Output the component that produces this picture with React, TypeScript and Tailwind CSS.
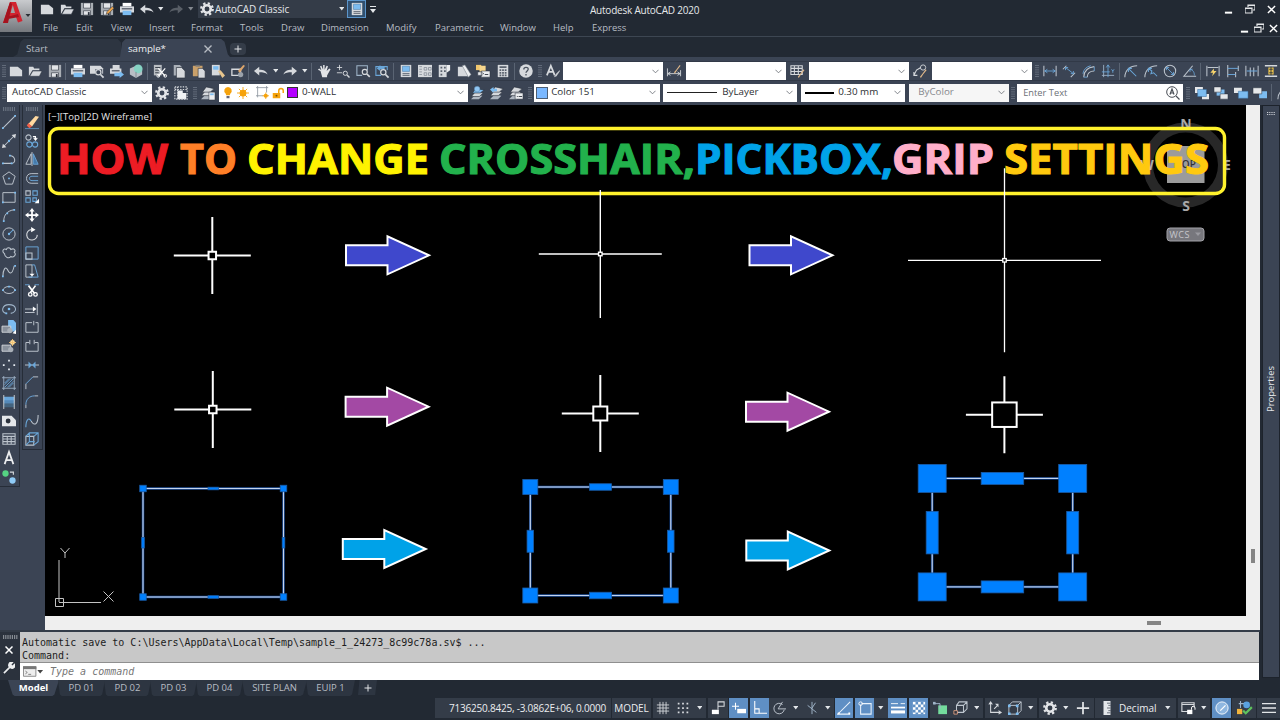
import type { ReactNode } from 'react';
import clsx from 'clsx';

const L = '#d6d9dd';
const B = '#7cbcf0';
const M = '#9fb4c8';
const K = '#2b323d';
const LINE = '#bcc4cd';
const BLUE = '#6aa6d8';

/* Shared glyph parts */
const page = <path d="M1 3h9l5 4v7H1z" fill={L} />;
const folder = (
  <>
    <path d="M1 14V3h5l1 2h6v2H5z" fill={L} />
    <path d="M5.500 8H16l-3 6H2z" fill={L} stroke={K} strokeWidth=".6" />
  </>
);
const floppy = (
  <>
    <path d="M1 1h14v14H1z" fill="#a9aeb4" />
    <path d="M4 1h8v6H4zM4 10h8v5H4z" fill="#e3e5e8" stroke={K} strokeWidth=".7" />
    <path d="M9 11.500h2V15H9z" fill={K} />
  </>
);
const printer = (
  <>
    <path d="M3 1h10v4H3z" fill="#fff" />
    <path d="M0 5h16v7H0z" fill={L} />
    <path d="M2 7h12v1.500H2z" fill="#555d69" />
    <path d="M3 10h10v5H3z" fill={B} />
  </>
);
const lens = (
  <>
    <circle cx="9.500" cy="9.500" r="3" fill="none" stroke={L} strokeWidth="1.400" />
    <path d="m12 12 3.500 3.500" stroke={L} strokeWidth="2" />
  </>
);
const gear = (
  <>
    <circle cx="8" cy="8" r="4.300" fill="none" stroke="#e3e5e8" strokeWidth="3" />
    <circle cx="8" cy="8" r="6.600" fill="none" stroke="#e3e5e8" strokeWidth="2.600" strokeDasharray="2.600 2.580" />
  </>
);
const undo = <path d="M0 8l6-5v3.500c5 0 8 1.500 9.500 5.500-2.500-2-5-2.500-9.500-2.500V13z" fill={L} />;
const redo = <path d="M16 8l-6-5v3.500c-5 0-8 1.500-9.500 5.500 2.500-2 5-2.500 9.500-2.500V13z" fill={L} />;
const sheets = (
  <>
    <path d="m5 10-5 5h9l4-4z" fill="#aeb6c0" />
    <path d="M5 6.500.5 12h9L14 8z" fill={L} stroke={K} strokeWidth=".7" />
    <path d="M6 3 1.500 8h9L15 4.500z" fill={B} stroke={K} strokeWidth=".7" />
  </>
);
const graySheets = (
  <>
    <path d="m5 10-5 5h9l4-4z" fill="#aeb6c0" />
    <path d="M5 5.500.5 11h9L14 7z" fill={L} stroke={K} strokeWidth=".7" />
    <path d="M6 1 1.500 7h9L15 3z" fill={L} stroke={K} strokeWidth=".7" />
  </>
);
const brush = <path d="m15.500 6-4 5-2.500 4-1-1.500 2.500-3L14.500 5z" fill="#e0b889" />;
const palette = (
  <>
    <path d="M2 1h12v14H2z" fill={L} />
    <path d="M4 2.500h8v6H4z" fill={B} stroke="#4a7ba6" strokeWidth=".6" />
    <path d="M4 11h8M4 13h8" stroke="#555d69" />
  </>
);

const stroked = (d: string, color = LINE, width = 1.2) => (
  <path d={d} fill="none" stroke={color} strokeWidth={width} />
);

const glyphs: Record<string, ReactNode> = {
  page,
  folder,
  floppy,
  printer,
  gear,
  undo,
  redo,
  sheets,
  palette,
  saveAs: <>{floppy}<path d="m7 14 1-3 6-6 2 2-6 6z" fill="#e9a24b" stroke={K} strokeWidth=".6" /></>,
  preview: <><path d="M0 2h12l3 3v6H0z" fill={L} /><path d="M6 6h8v8H6z" fill="#3b4454" />{lens}</>,
  publish: <><path d="M3 1h8v4H3zM0 5h13v6H0z" fill={L} /><path d="M2 7h9v1.500H2z" fill="#555d69" /><path d="M5 10h6V8l5 4-5 4v-2H5z" fill={B} /></>,
  sphere: <><path d="m1 5 7-3 7 4v6l-7 4-7-4z" fill="#b8bec5" /><circle cx="10.500" cy="5.500" r="5" fill="#86d3c4" /><path d="M8 16V9" stroke="#7d858f" /></>,
  cut: <><path d="M1 1h9v12H1z" fill="#b9bdc2" /><path d="M2.500 4h6M2.500 7h5M2.500 10h4" stroke={K} /><path d="m6 5 8 9M14 5l-8 9" stroke="#fff" strokeWidth="1.300" /><circle cx="6" cy="13.500" r="1.600" fill="none" stroke="#fff" /><circle cx="14" cy="13.500" r="1.600" fill="none" stroke="#fff" /></>,
  copy: <><path d="M2 1h7l2 2v10H2z" fill="#aab0b8" /><path d="M5 4h6l4 4v8H5z" fill={L} stroke={K} strokeWidth=".8" /></>,
  paste: <><path d="M1 2h11v12H1z" fill="#c9a06a" /><path d="M4 1h5v2H4z" fill="#777" /><path d="M7 5h5l3 3v8H7z" fill={L} stroke={K} strokeWidth=".7" /></>,
  match: <><path d="M1 1h9v12H1z" fill={L} /><path d="M2.500 2.500h6v4h-6z" fill={B} /><path d="m8 8 3-1 5 6-3 3z" fill="#e8c58d" /></>,
  block: <><path d="M1 6h10v7H1z" fill="none" stroke={L} strokeWidth="1.500" /><circle cx="11" cy="12" r="3" fill="#9aa1aa" /><path d="m8 8 6-7 2 1-6 8z" fill="#dca56b" /></>,
  hand: <path d="M4 8 1 6.500 2.500 5 5 7 3.500 2.500 5 2l2 4.500V1h1.700v5.500L11 2l1.500.6L11 8l3-3 1.500 1-4 7v2H6z" fill="#e3e5e8" />,
  zoomRt: <><path d="M1 4h6M4 1v6M1 10h6" stroke={L} /><g transform="translate(3 3)scale(.8)">{lens}</g></>,
  zoomWin: <>{stroked('M1 2h12v11H1z', M)}<path d="M7 7h8v8H7z" fill="#3b4454" /><g transform="translate(1)scale(.95)">{lens}</g></>,
  zoomPrev: <>{stroked('M1 3h13v10H1z', BLUE)}<path d="m2 5 4-4v2h5v3H6v2z" fill={BLUE} /><path d="M7 7h8v8H7z" fill="#3b4454" />{lens}</>,
  designCenter: <><path d="M0 1h16v14H0z" fill={L} /><path d="M1.500 3h3M1.500 6h3M1.500 9h3M1.500 12h3M7 4h3v3H7zM12 4h3v3h-3zM7 10h3v3H7zM12 10h3v3h-3z" fill="none" stroke="#7b838e" strokeWidth=".8" /></>,
  toolPal: <><path d="M2 1h9v14H2z" fill={L} /><path d="M11 1h4v6l-4 3z" fill="#eceef0" /><path d="M4 3h2v2H4zM8 3h2v2H8zM4 7h2v2H4zM8 7h2v2H8zM4 11h2v2H4z" fill="#59616d" /></>,
  sheetSet: <><path d="M1 3h6l6 11H1z" fill={L} /><path d="M6 2 9 1l7 11-3 3z" fill="#eceef0" stroke="#777f89" strokeWidth=".6" /></>,
  markup: <><path d="M0 1h6v6H0z" fill="#f0c66d" /><path d="M4 2h7v7H4z" fill="#f5d58c" /><path d="M2 9h5v4H2zM6 8h10v7H6z" fill="#eceef0" stroke={K} strokeWidth=".6" /><path d="M8 11h1M10 12h4" stroke={K} /></>,
  calc: <><path d="M2 1h12v14H2z" fill={L} /><path d="M4 2.500h8v2H4zM4 6h2v2H4zM7 6h2v2H7zM10 6h2v2h-2zM4 9h2v2H4zM7 9h2v2H7zM10 9h2v2h-2zM4 12h2v2H4zM7 12h2v2H7zM10 12h2v2h-2z" fill="#59616d" /></>,
  help: <><circle cx="8" cy="8" r="7.700" fill="#d6d9dd" />{stroked('M5.500 6.200C5.500 3 10.700 3.200 10.500 6c-.1 1.800-2.500 2-2.500 4M8 11.400v1.600', '#4a525e', 1.500)}</>,
  textStyle: <>{stroked('M1 13 5.500 2l4.500 11M3 9h5', L, 2)}<path d="m15.500 7-4 4-2.500 4 3-1 4-6z" fill="#c9ccd1" /></>,
  dimStyle: <>{stroked('M.5 5v9M15.500 7v7M1 11h14M4 9l-3 2 3 2M12 9l3 2-3 2', L, 1)}<g transform="translate(0 -4)">{brush}</g></>,
  tableStyle: <>{stroked('M1 2h13v10H1zM1 5h13M1 8.500h13M5 2v10M9.500 2v10', L, 1.200)}<g transform="translate(1 1)">{brush}</g></>,
  leaderStyle: <>{stroked('M1 13 4 7l5-3M1 9v4h4', L, 1.200)}<circle cx="11.500" cy="4" r="3" fill="none" stroke={L} /><g transform="translate(0 1)">{brush}</g></>,
  dimLinear: <>{stroked('M1 2v12M15 2v12')}{stroked('M2 8h12M5 6 2 8l3 2M11 6l3 2-3 2', BLUE, 1)}</>,
  dimAligned: <>{stroked('m1 6 4-4M10 15l5-5')}{stroked('m4 4 9 7M4 7V4h3M13 8v3h-3', BLUE, 1)}</>,
  dimArc: <>{stroked('M2 15c0-7 4-11 12-12M6 15c0-4 3-7 8-7')}{stroked('M1 11c1-5 4-8 9-9M14 3v5M2 15h4', BLUE, 1)}</>,
  dimOrd: <>{stroked('M1 13h14M3 1v14', M, 1)}{stroked('M1 9h9M8 1v14M6 4l2-3 2 3M12 6l1.500 2L15 6M13.500 8v2', BLUE, 1)}</>,
  dimRadius: <>{stroked('M1 15C1 7 7 2 15 2')}{stroked('m5 5 9 9M5 9V5h4', BLUE, 1.200)}</>,
  dimJog: <>{stroked('M1 15C1 7 7 2 15 2')}{stroked('m5 5 4 3-1 3 3-1 4 4M5 9V5h4', BLUE, 1.200)}</>,
  dimDia: <><circle cx="8" cy="8" r="6.500" fill="none" stroke={LINE} strokeWidth="1.200" />{stroked('m4 4 8 8M4 7V4h3M12 9v3H9', BLUE, 1)}</>,
  dimAngle: <>{stroked('M15 14H1L11 2')}{stroked('M8 6c4 1 5 4 5 7M8 9V6h3', BLUE, 1)}</>,
  dimQuick: <>{stroked('M1 2v12M15 2v12M2 4h12')}<path d="M9 5 5 10h3l-1 4 5-6H9z" fill="#f5d36c" /></>,
  dimBase: <>{stroked('M2 1v14M14 2v6M11 9v6')}{stroked('M2 5h12M2 12h9', BLUE, 1.100)}</>,
  dimCont: <>{stroked('M1 2v12M6 4v10M10 4v10M15 2v12')}{stroked('M2 8h12', BLUE, 1.200)}</>,
  dimSpace: <>{stroked('M1 2h14M1 14h14', L, 1.500)}<path d="M5 4h6v8H5z" fill="#e8c04c" />{stroked('M8 3v10M6 6h4M6 10h4', K, 1)}</>,
  wsSave: <><path d="M4 5h6v3h4v7H4z" fill="#f1f3f5" /><path d="M1 1h14v14H1zM1 4h14M4 1v14" fill="none" stroke={L} strokeWidth="1.300" strokeDasharray="1.600 1.400" /></>,
  layers: <>{graySheets}<path d="M9 7h7v9H9z" fill="#eceef0" stroke={K} strokeWidth=".6" /><path d="M10.500 8.500h4v2h-4z" fill={B} /></>,
  layerCur: <>{sheets}<circle cx="7" cy="3.500" r="3.200" fill="#8fc6f3" stroke="#587ea2" strokeWidth=".5" /></>,
  layerPrev: <>{graySheets}<path d="m0 4 4-3v2h4v3H4v2z" fill={B} /></>,
  layerState: <>{graySheets}<path d="M7 8h9v7H7z" fill="#eceef0" stroke={K} strokeWidth=".6" /><path d="M9 12h1M11 12h4" stroke={K} /></>,
  bulb: <><path d="M8 0a5 5 0 0 1 3 9l-.5 2h-5L5 9a5 5 0 0 1 3-9z" fill="#f6a30c" /><path d="M6 12h4v3H6z" fill="#667" /></>,
  sun: <><circle cx="8" cy="8" r="4.500" fill="#f6a30c" /><path d="M8 0v16M0 8h16M2.500 2.500l11 11M13.500 2.500l-11 11" stroke="#f6a30c" strokeWidth="1.200" /></>,
  vpFreeze: <>{stroked('M2 0v14M0 2h15M13 0v8M0 12h9', '#8a929c', 1)}<circle cx="12" cy="12" r="2.600" fill="#f6a30c" /><path d="M12 8v8M8 12h8" stroke="#f6a30c" /></>,
  lock: <><path d="M1 8h10v7H1z" fill="#f6a30c" />{stroked('M9 8V5a3 3 0 0 1 6 0v3', '#f6a30c', 2)}<circle cx="6" cy="11.500" r="1.300" fill="#7b5000" /></>,
  order1: <><path d="M0 1h9v7H0zM8 9h8v6H8z" fill="#e6e8ea" /><path d="M3 4h10v8H3z" fill={B} stroke="#3b6f9f" strokeWidth=".6" /></>,
  order2: <><path d="M3 4h9v7H3z" fill={B} /><path d="M0 1h8v6H0zM7 9h9v6H7z" fill="#e6e8ea" stroke={K} strokeWidth=".6" /></>,
  order3: <><path d="M0 2h9v6H0z" fill="#e6e8ea" /><path d="M5 6h11v8H5z" fill={B} stroke="#3b6f9f" strokeWidth=".6" /></>,
  order4: <><path d="M7 6h9v8H7z" fill={B} /><path d="M0 2h10v7H0z" fill="#e6e8ea" stroke={K} strokeWidth=".6" /></>,

  line: <>{stroked('M1 15 15 1')}<path d="M0 14h2v2H0zM14 0h2v2h-2z" fill={B} /></>,
  xline: <>{stroked('M2 14 14 2')}<path d="m0 16 1-5 4 4zM16 0l-5 1 4 4z" fill={L} /><circle cx="8" cy="8" r="1.300" fill={B} /></>,
  pline: <>{stroked('M1 13h10c5 0 5-8-2-9')}<path d="M0 12h2v2H0zM8 3h2v2H8zM10 12h2v2h-2z" fill={B} /></>,
  polygon: <>{stroked('m8 1 7 5-3 9H4L1 6z', LINE, 1.100)}<circle cx="8" cy="8.500" r="1" fill={B} /></>,
  rect: <>{stroked('M1 3h14v11H1z', LINE, 1.100)}<path d="M0 13h2v2H0zM14 2h2v2h-2z" fill={B} /></>,
  arc: <>{stroked('M2 15C2 8 6 3 14 2', LINE, 1.100)}<path d="M1 14h2v2H1zM5 5h2v2H5zM13 1h2v2h-2z" fill={B} /></>,
  circle: <><circle cx="8" cy="8" r="7" fill="none" stroke={LINE} strokeWidth="1.100" />{stroked('m8 8 5-5', BLUE, 1.200)}<circle cx="8" cy="8" r="1.300" fill={B} /></>,
  cloud: stroked('M3 9C-1 6 2 2 5 4c1-3 5-2 5 0 4-2 6 1 4 3 3 3-1 7-4 5-2 3-7 1-7-3z'),
  spline: <>{stroked('M1 14c0-7 3-12 5-8s5 9 8-4')}<path d="M0 13h2v2H0zM14 1h2v2h-2z" fill={B} /></>,
  ellipse: <><ellipse cx="8" cy="8" rx="6.500" ry="4" fill="none" stroke={LINE} strokeWidth="1.100" /><path d="M0 7h2v2H0zM14 7h2v2h-2zM7 3h2v2H7z" fill={B} /></>,
  ellArc: <>{stroked('M10 13c9-2 6-10-2-10S-2 12 5 13', M, 1.200)}<circle cx="8" cy="8" r="1.500" fill={B} /><path d="M4 12h2v2H4z" fill={B} /></>,
  insert: <><path d="M7 0h6l3 3v10H7z" fill={B} /><path d="M0 7h10v7H0z" fill="#89919c" stroke={L} /><circle cx="9" cy="12" r="3" fill="#a9b0b8" /><path d="m12 15 4-4v5z" fill="#fff" /></>,
  makeBlock: <><path d="M0 7h10v7H0z" fill="#89919c" stroke={L} /><circle cx="10" cy="12" r="3" fill="#a9b0b8" /><circle cx="12" cy="4" r="2.800" fill="#ffe0a0" /><path d="M12 0v8M8 4h8" stroke="#f3c678" /></>,
  point: <path d="M7 2h2v2H7zM7 12h2v2H7zM1 7h2v2H1zM13 7h2v2h-2z" fill="#e8edf3" />,
  hatch: <>{stroked('M2 0v16M14 0v16M0 2h16M0 14h16', M, 1)}{stroked('m3 8 5-5M3 13 13 3M8 13l5-5M3 10l7-7M6 13l7-7', BLUE, 1)}</>,
  gradient: <><path d="M2 2h12v6H2z" fill="#67a5da" /><path d="M2 6h12v4H2z" fill="#5489b8" /><path d="M2 10h12v4H2z" fill="#44647f" />{stroked('M2 0v16M14 0v16', L, 1)}</>,
  region: <><path d="M0 2h11l5 5v7H0z" fill="#e4e7ea" /><circle cx="7" cy="8" r="2.800" fill="#2b323d" /></>,
  table: stroked('M1 2h14v12H1zM1 5h14M1 8h14M1 11h14M6 5v9M10.500 5v9'),
  mtext: stroked('M3 15 8 1l5 14M4.500 10.500h7', '#eceef0', 2),
  addSel: <><circle cx="4" cy="4" r="3.600" fill="#55d483" /><circle cx="12" cy="12" r="3.600" fill="#8fcbf7" />{stroked('M9 2.500h4v3', L, 1.300)}</>,

  erase: <><path d="m4 10 8-9 4 1-8 11z" fill="#ffd9a0" /><path d="m4 9 4 4-3 2-3-3z" fill="#f0604a" />{stroked('M0 15.500h16', BLUE, .8)}</>,
  copyObj: <><circle cx="4" cy="4" r="3" fill="none" stroke={LINE} strokeWidth="1.200" /><circle cx="5" cy="12" r="3" fill="none" stroke={BLUE} strokeWidth="1.200" /><circle cx="11.500" cy="12" r="3" fill="none" stroke={BLUE} strokeWidth="1.200" />{stroked('M9 3h3v3M10 4.500 12 7l2-2.500', '#fff', 1.200)}</>,
  mirror: <>{stroked('M7 2v12H1zM8 0v16', LINE, 1.100)}<path d="M9.500 2v12H15z" fill="#447aab" stroke={BLUE} /></>,
  offset: <>{stroked('M15 3H7c-7 0-7 11 0 11h8', LINE, 1.100)}{stroked('M15 6H8c-4 0-4 5 0 5h7', BLUE, 1.100)}</>,
  array: <>{stroked('M1 1h5v5H1z')}{stroked('M9 1h5v5H9zM1 9h5v5H1zM9 9h4v4H9z', BLUE, 1.200)}<path d="m11 15 5-5v5z" fill="#fff" /></>,
  move: <><path d="M8 0 5 4h6zM8 16l-3-4h6zM0 8l4-3v6zM16 8l-4-3v6z" fill="#fff" />{stroked('M8 3v10M3 8h10', '#fff', 2)}</>,
  rotate: <>{stroked('M7 3a6 6 0 1 0 7 6', L, 1.300)}<path d="m7 0 5 3-5 3z" fill="#fff" /></>,
  scale: <>{stroked('M1 1h14v14H1z', BLUE, 1.100)}{stroked('M1 8h7v7H1z')}</>,
  stretch: <>{stroked('M1 1h7v14H1z', LINE, 1.100)}{stroked('M8 1h3l4 14H4', BLUE, 1.100)}<path d="M5 11h6l-3 3z" fill="#fff" /></>,
  trim: <>{stroked('M0 2h5M11 2h5', BLUE, 1)}{stroked('m4 3 7 9M12 3 6 11', '#fff', 1.900)}<circle cx="6" cy="13" r="2" fill="none" stroke="#fff" strokeWidth="1.500" /><circle cx="12" cy="13" r="2" fill="none" stroke="#fff" strokeWidth="1.500" /></>,
  extend: <>{stroked('M0 8h11M0 12h11M14 2v13', LINE, 1.100)}<path d="m9 5 4 3-4 3z" fill="#fff" /></>,
  breakPt: stroked('M8 3H1v11h14V3h-3M10 1v5', LINE, 1.100),
  breakGap: stroked('M5 4H1v10h14V4h-4M5.500 1v5M10.500 1v5', LINE, 1.100),
  join: <>{stroked('M0 8h16', LINE, 1.100)}<path d="m4 4 4 4-4 4zM12 4 8 8l4 4z" fill={BLUE} /></>,
  chamfer: <>{stroked('M1 15V9M9 1h6', LINE, 1.100)}{stroked('m1 9 8-8', BLUE, 1.100)}</>,
  fillet: <>{stroked('M1 15v-4M11 1h4', LINE, 1.100)}{stroked('M1 11C1 5 5 1 11 1', BLUE, 1.100)}</>,
  blend: <>{stroked('M1 15c0-8 3-12 6-7', BLUE, 1.200)}{stroked('M7 8c4 7 8 3 8-7')}</>,
  explode: <>{stroked('M1 5h9v10H1z')}{stroked('m1 5 4-4h10v10l-5 4M10 5l5-4M5 1v10h6M5 11l-4 4', BLUE, 1.200)}</>,

  grid: stroked('M4.500 1v14M11.500 1v14M1 4.500h14M1 11.500h14M8 1v14M1 8h14', L, 1),
  dots: <path d="M2 2h2v2H2zM7 2h2v2H7zM12 2h2v2h-2zM2 7h2v2H2zM7 7h2v2H7zM12 7h2v2h-2zM2 12h2v2H2zM7 12h2v2H7zM12 12h2v2h-2z" fill={L} />,
  infer: <><path d="M1 10h8v5H1z" fill="#fff" />{stroked('M8 10V1h7v5H8', L, 1.200)}</>,
  dynIn: <>{stroked('M4 2v8M0 6h8', '#fff', 1.200)}<path d="M6 9h10v5H6z" fill="#fff" /></>,
  ortho: stroked('M2 0v14h14M2 9h5v5', '#fff', 1.200),
  polar: stroked('M12 4a6 6 0 1 0 2 6M7 9h9M7 9l5-8', LINE, 1.100),
  iso: <>{stroked('m3 5 10 8M8 1v14', M, 1.100)}{stroked('M12 2 8 8', M, 1.100)}</>,
  track: <>{stroked('M0 15h15M2 14 15 1', '#eaf3fc', 1.200)}<path d="M1 13h2v2H1zM13 13h2v2h-2z" fill="#fff" /></>,
  osnap: <>{stroked('M4 3h11v12H3V4', '#eaf3fc', 1.200)}<circle cx="3" cy="3" r="2" fill="none" stroke="#fff" /></>,
  lweight: <>{stroked('M0 3h8M11 3h5', '#fff', 1)}{stroked('M0 7.500h16', '#fff', 2)}{stroked('M0 12.500h16', '#fff', 3.500)}</>,
  transp: (
    <>
      <path d="M1 1h14v14H1z" fill="#fff" />
      <path d="M4 1h3v3H4zM10 1h3v3h-3zM1 4h3v3H1zM7 4h3v3H7zM13 4h2v3h-2zM4 7h3v3H4zM10 7h3v3h-3zM1 10h3v3H1zM7 10h3v3H7zM13 10h2v3h-2zM4 13h3v2H4zM10 13h3v2h-3z" fill="#5f8fc4" />
    </>
  ),
  cycle: <><path d="M6 5h10v10H6z" fill="#74dc9d" />{stroked('M1 3h7v6', M, 1.100)}<path d="M0 1h3v3H0z" fill={M} /></>,
  osnap3: <>{stroked('M4 5h8v8H4zM4 5l3-4h9v8l-4 4M12 5l4-4')}<path d="M1 11h4v4H1z" fill={K} stroke="#e0a184" /></>,
  ducs: <>{stroked('M3 1v12h12M1 4l2-3 2 3M12 11l3 2-3 2M7 9l4-4', L, 1.200)}<path d="M8 3h4v4z" fill={L} /></>,
  filter: <>{stroked('M1 5h10v10H1zM5 1h10v10M1 5l4-4M11 5l4-4M11 15l4-4', LINE, 1.100)}<path d="M0 4h3v3H0zM9 4h3v3H9zM0 13h3v3H0zM9 13h3v3H9z" fill={B} /></>,
  plus: stroked('M8 1v14M1 8h14', '#e3e5e8', 2),
  ruler: <><path d="M4 0h8v16H4z" fill="#e4e7ea" />{stroked('M8 2.500h4M9.500 5h3M8 8h4M9.500 11h3M8 13.500h4', '#59616d', 1)}</>,
  lockUi: <>{stroked('M8 12H1V2h14v5M1 4h14', L, 1.300)}<path d="M7 10h6v5H7z" fill="#fff" />{stroked('M12 10V8a2 2 0 0 1 4 0v2', '#fff', 1.100)}</>,
  perf: <><circle cx="8" cy="8" r="7" fill="#8fb7e0" stroke="#fff" />{stroked('m6 11 6-6', '#fff', 1.500)}</>,
  cloudOk: <><path d="M0 9h6v6H0z" fill="#f2b43c" />{stroked('M2 3h9v5M4 0v8', M, 1.200)}<circle cx="11" cy="4.500" r="3.800" fill="#5aa2e0" />{stroked('m7 11 3 3 7-7', '#5fc25e', 2.500)}</>,
  menu: stroked('M0 3h16M0 8h16M0 13h16', '#e3e5e8', 1.600),
};

function Icon({ name, className = 'size-[14px]' }: { name: string; className?: string }) {
  return (
    <svg viewBox="0 0 16 16" className={clsx('shrink-0 overflow-visible', className)}>
      {glyphs[name]}
    </svg>
  );
}

const Caret = ({ className = 'w-[10px]' }: { className?: string }) => (
  <span className={clsx('flex shrink-0 items-center justify-center', className)}>
    <svg viewBox="0 0 6 4" className="h-[3.5px] w-[5.5px]"><path d="M0 0h6L3 4z" fill="#e4e7ea" /></svg>
  </span>
);

const Chevron = () => (
  <svg viewBox="0 0 8 5" className="h-[5px] w-[7px] shrink-0"><path d="m.5.5 3.500 3.500L7.500.5" fill="none" stroke="#70757c" /></svg>
);

const Grip = () => (
  <svg viewBox="0 0 4 12" className="h-[12px] w-[4px] shrink-0">
    <path d="M1 0v12M3 0v12" stroke="#8a93a0" strokeDasharray="1 1.200" />
  </svg>
);

const Sep = () => <span className="mr-[2px] ml-px h-[17px] w-px shrink-0 bg-[#5a6473]" />;

/* Entries: glyph name, "|" separator, "v" flyout caret */
function Tools({ items }: { items: string[] }) {
  return (
    <>
      {items.map((item, i) => {
        if (item === '|') return <Sep key={i} />;
        if (item === 'v') return <Caret key={i} />;
        return (
          <span key={i} className="flex w-[19.45px] shrink-0 items-center justify-center">
            <Icon name={item} />
          </span>
        );
      })}
    </>
  );
}

function Combo({ className, children }: { className: string; children?: ReactNode }) {
  return (
    <div className={clsx('flex h-[18px] shrink-0 items-center justify-between pr-[4px] text-[9.8px] text-[#2c2f33]', className)}>
      <div className="flex items-center whitespace-nowrap">{children}</div>
      <Chevron />
    </div>
  );
}

function WindowButtons({ className }: { className: string }) {
  return (
    <div className={clsx('flex items-center', className)}>
      <svg viewBox="0 0 10 10" className="size-[9px]"><path d="M1 8.500h8" stroke="#fff" strokeWidth="2.200" /></svg>
      <svg viewBox="0 0 10 10" className="size-[10px]"><path d="M3 3V1h7v5H8M3 1.500h7M0 4h7v5H0zM0 4.500h7" fill="none" stroke="#e6e8ea" strokeWidth="1.200" /></svg>
      <svg viewBox="0 0 10 10" className="size-[9px]"><path d="m1 1 8 8M9 1 1 9" stroke="#fff" strokeWidth="1.600" /></svg>
    </div>
  );
}

const menus = [
  ['File', 'w-[33px]'],
  ['Edit', 'w-[35px]'],
  ['View', 'w-[38px]'],
  ['Insert', 'w-[42px]'],
  ['Format', 'w-[49px]'],
  ['Tools', 'w-[41px]'],
  ['Draw', 'w-[40px]'],
  ['Dimension', 'w-[65px]'],
  ['Modify', 'w-[49px]'],
  ['Parametric', 'w-[65px]'],
  ['Window', 'w-[53px]'],
  ['Help', 'w-[39px]'],
  ['Express', 'w-[40px]'],
];

function TitleBar() {
  return (
    <header className="flex h-[37px] border-b border-[#3d4652]">
      <div className="flex h-[32px] w-[32px] items-center bg-linear-to-b from-[#c9cbce] to-[#75787d]">
        <svg viewBox="0 0 32 32" className="size-[32px]">
          <path d="M3 23 10 2h6l6.500 19-4.500 1.500-2-5.500-7 .5-1.500 5z" fill="#d2232f" />
          <path d="m10.500 13 2.300-8L15 13z" fill="#9fa1a4" />
          <path d="M3 23 10 2l2 2-4 19zM7 17l11-3 1 3-11 2z" fill="#a5131f" />
          <path d="M25.500 14h5L28 17z" fill="#2b2f35" />
        </svg>
      </div>
      <div className="relative flex flex-1 flex-col">
        <div className="flex h-[18px] items-center">
          <div className="flex w-[166px] items-center pl-[5px]">
            {['page', 'folder', 'floppy', 'saveAs', 'printer', 'undo'].map((n) => (
              <span key={n} className="flex w-[20px] shrink-0 justify-center"><Icon name={n} /></span>
            ))}
            <Caret className="w-[8px]" />
            <span className="flex w-[22px] justify-center opacity-30"><Icon name="redo" /></span>
            <Caret className="w-[8px] opacity-50" />
          </div>
          <div className="flex h-[18px] w-[149px] items-center bg-[#343c48] pl-[2px]">
            <Icon name="gear" className="size-[14px]" />
            <span className="mt-px ml-px text-[10px] tracking-[-0.1px] text-[#e4e7ea]">AutoCAD Classic</span>
            <Caret className="ml-auto w-[11px]" />
          </div>
          <div className="flex h-[18px] w-[19px] items-center justify-center border border-[#5b95cb] bg-[#32506f]">
            <Icon name="palette" className="size-[14px]" />
          </div>
          <svg viewBox="0 0 6 7" className="ml-[4px] h-[7px] w-[6px]"><path d="M0 0h6v1H0zM0 3h6L3 7z" fill="#e4e7ea" /></svg>
        </div>
        <nav className="flex h-[19px] items-center pt-[3px] pl-[11px] text-[9.5px] text-[#b7bcc3]">
          {menus.map(([label, width]) => <span key={label} className={clsx('shrink-0', width)}>{label}</span>)}
        </nav>
        <div className="absolute top-[3px] left-[558px] text-[10px] tracking-[-0.22px] whitespace-nowrap text-[#e6e8ea]">Autodesk AutoCAD 2020</div>
        <WindowButtons className="absolute top-[4px] right-[4px] gap-[12px]" />
        <WindowButtons className="absolute top-[23px] right-[2px] gap-[5px]" />
      </div>
    </header>
  );
}

function FileTabs() {
  return (
    <div className="flex h-[20px] items-end pl-[13px]">
      <div className="flex h-[18px] w-[108px] items-center bg-[#2d3541] pt-[2px] pl-[13px] text-[9.8px] text-[#b7bcc3] [clip-path:polygon(0_100%,4%_85%,7%_15%,10%_0,97%_0,100%_20%,100%_100%)]">
        Start
      </div>
      <div className="-ml-px flex h-[18px] w-[110px] items-center justify-between bg-[#3b4454] pt-[2px] pr-[18px] pl-[8px] text-[9.8px] tracking-[-0.1px] text-[#eceef0] [clip-path:polygon(0_100%,2%_20%,5%_0,92%_0,95%_15%,98%_85%,100%_100%)]">
        sample*
        <svg viewBox="0 0 8 8" className="size-[8px]"><path d="m.5.5 7 7M7.500.5l-7 7" stroke="#b7bcc3" strokeWidth="1.400" /></svg>
      </div>
      <div className="mb-[2px] flex h-[12px] w-[16px] items-center justify-center rounded-sm bg-[#343c48]">
        <Icon name="plus" className="size-[8px]" />
      </div>
    </div>
  );
}

function Toolbars() {
  return (
    <div className="flex h-[48px] shrink-0 flex-col bg-[#3b4454]">
      <div className="mt-[4px] flex h-[20px] items-center overflow-hidden border-y border-[#313947] pl-[2px]">
        <Grip />
        <Tools items={['page', 'folder', 'floppy', '|', 'printer', 'preview', 'publish', 'sphere', '|', 'cut', 'copy', 'paste', 'match', 'block', '|', 'undo', 'v', 'redo', 'v', '|', 'hand', 'zoomRt', 'zoomWin', 'zoomPrev', '|', 'palette', 'designCenter', 'toolPal', 'sheetSet', 'markup', 'calc', '|', 'help']} />
        <span className="flex w-[27px] shrink-0 items-center justify-between pl-[2px]">
          <Grip />
          <Icon name="textStyle" className="mr-[3px] size-[14px]" />
        </span>
        <Combo className="w-[100px] bg-white" />
        <span className="flex w-[23px] shrink-0 justify-center"><Icon name="dimStyle" /></span>
        <Combo className="w-[100px] bg-white" />
        <span className="flex w-[23px] shrink-0 justify-center"><Icon name="tableStyle" /></span>
        <Combo className="w-[100px] bg-white" />
        <span className="flex w-[23px] shrink-0 justify-center"><Icon name="leaderStyle" /></span>
        <Combo className="w-[100px] bg-white" />
        <span className="w-[3px] shrink-0" />
        <Grip />
        <span className="w-px shrink-0" />
        <Tools items={['dimLinear', 'dimAligned', 'dimArc', 'dimOrd', '|', 'dimRadius', 'dimJog', 'dimDia', 'dimAngle', '|', 'dimQuick', 'dimBase', 'dimCont', 'dimSpace']} />
      </div>
      <div className="flex h-[22px] items-center overflow-hidden pt-px pl-[2px]">
        <Grip />
        <Combo className="ml-px w-[145px] bg-white pl-[5px]">AutoCAD Classic</Combo>
        <Tools items={['gear', 'wsSave']} />
        <span className="flex w-[6px] shrink-0 justify-end"><Grip /></span>
        <span className="flex w-[22px] shrink-0 justify-center"><Icon name="layers" /></span>
        <Combo className="w-[249px] bg-white pl-[3px]">
          <span className="flex items-center gap-[3px]">
            <Icon name="bulb" className="size-[12px]" />
            <Icon name="sun" className="size-[12px]" />
            <span className="w-[1px]" />
            <Icon name="vpFreeze" className="size-[13px]" />
            <Icon name="lock" className="size-[12px]" />
            <span className="size-[11px] border border-[#333] bg-[#b400ff]" />
          </span>
          <span className="ml-[4px]">0-WALL</span>
        </Combo>
        <Tools items={['layerCur', 'layerPrev', 'layerState']} />
        <span className="flex w-[8px] shrink-0 justify-center"><Grip /></span>
        <Combo className="w-[126px] bg-white pl-[2px]">
          <span className="mr-[3px] size-[12px] border border-[#4d5f74] bg-[#7ab8ff]" />
          Color 151
        </Combo>
        <Combo className="ml-[3px] w-[134px] bg-white pl-[4px]">
          <span className="mr-[5px] h-px w-[50px] bg-[#222]" />
          ByLayer
        </Combo>
        <Combo className="ml-[4px] w-[104px] bg-white pl-[4px]">
          <span className="mr-[4px] h-[2px] w-[29px] bg-black" />
          0.30 mm
        </Combo>
        <Combo className="ml-[4px] w-[100px] bg-[#f6f6f6] pl-[9px]"><span className="text-[#85888d]">ByColor</span></Combo>
        <span className="flex w-[8px] shrink-0 justify-center"><Grip /></span>
        <div className="flex h-[18px] w-[166px] shrink-0 items-center justify-between bg-white pr-[3px] pl-[6px] text-[9.3px] text-[#6c7076]">
          <span className="pt-px">Enter Text</span>
          <svg viewBox="0 0 14 14" className="size-[14px]">
            <circle cx="6" cy="6" r="5.300" fill="none" stroke="#4a4f56" />
            <path d="m10 10 3.500 3.500M4 8.500 6 3l2 5.500M4.700 7h2.600" fill="none" stroke="#4a4f56" strokeWidth="1.200" />
          </svg>
        </div>
        <span className="flex w-[9px] shrink-0 justify-center"><Grip /></span>
        <Tools items={['order1', 'order2', 'order3', 'order4', '|', 'dimJog']} />
      </div>
    </div>
  );
}

const drawTools = ['line', 'xline', 'pline', 'polygon', 'rect', 'arc', 'circle', 'cloud', 'spline', 'ellipse', 'ellArc', 'insert', 'makeBlock', 'point', 'hatch', 'gradient', 'region', 'table', 'mtext', 'addSel'];
const modifyTools = ['erase', 'copyObj', 'mirror', 'offset', 'array', 'move', 'rotate', 'scale', 'stretch', 'trim', 'extend', 'breakPt', 'breakGap', 'join', 'chamfer', 'fillet', 'blend', 'explode'];

function ToolColumn({ items, className }: { items: string[]; className: string }) {
  return (
    <div className={clsx('flex flex-col items-center self-start border-r border-b border-[#262d38]', className)}>
      <svg viewBox="0 0 12 4" className="mt-[2px] mb-[1.500px] h-[4px] w-[12px]"><path d="M0 1h12M0 3h12" stroke="#98a1ad" strokeDasharray="1.200 1" /></svg>
      {items.map((n) => (
        <span key={n} className="flex h-[18.680px] items-center"><Icon name={n} /></span>
      ))}
    </div>
  );
}

function BlockArrow({ x, y, fill }: { x: number; y: number; fill: string }) {
  return <path transform={`translate(${x} ${y})`} d="M0-10H41.500V-19L83 0 41.500 19V10H0z" fill={fill} stroke="#fff" strokeWidth="2" />;
}

function Crosshair({ x, y, arm, vArm = arm, box, w }: { x: number; y: number; arm: number; vArm?: number; box: number; w: number }) {
  const h = box / 2;
  return (
    <g transform={`translate(${x} ${y})`} fill="none" stroke="#fff" strokeWidth={w}>
      <path d={`M${-arm} 0H${-h}M${h} 0H${arm}M0 ${-vArm}V${-h}M0 ${h}V${vArm}`} />
      <rect x={-h} y={-h} width={box} height={box} />
    </g>
  );
}

function GripRect({ x, y, grip, long, thick }: { x: number; y: number; grip: number; long: number; thick: number }) {
  const w = 140.5;
  const h = 108.5;
  const corners = [[0, 0], [w, 0], [0, h], [w, h]];
  return (
    <g transform={`translate(${x} ${y})`}>
      <rect width={w} height={h} fill="none" stroke="#0b3a82" strokeWidth="2.600" />
      <rect width={w} height={h} fill="none" stroke="#c3d4ee" strokeWidth="1.200" />
      <g fill="#0080ff" stroke="#1a5ca8" strokeWidth=".8">
        {corners.map(([cx, cy]) => (
          <rect key={`${cx}-${cy}`} x={cx - grip / 2} y={cy - grip / 2} width={grip} height={grip} />
        ))}
        {[0, h].map((cy) => <rect key={cy} x={(w - long) / 2} y={cy - thick / 2} width={long} height={thick} />)}
        {[0, w].map((cx) => <rect key={cx} x={cx - thick / 2} y={(h - long) / 2} width={thick} height={long} />)}
      </g>
    </g>
  );
}

const banner = [
  { text: 'HOW', x: 57, w: 111, color: '#ed1c24' },
  { text: 'TO', x: 180, w: 57, color: '#ff7f27' },
  { text: 'CHANGE', x: 247, w: 182, color: '#fff200' },
  { text: 'CROSSHAIR,', x: 439, w: 256, color: '#22b14c' },
  { text: 'PICKBOX,', x: 695, w: 198, color: '#00a2e8' },
  { text: 'GRIP', x: 892, w: 102, color: '#ffaec9' },
  { text: 'SETTINGS', x: 1004, w: 205, color: '#ffc90e' },
];

function ModelSpace() {
  return (
    <svg viewBox="45 105 1201 511" className="block h-[511px] w-[1201px] bg-black font-['Open_Sans','Noto_Sans',sans-serif]">
      <text x="48" y="119.500" fontSize="9.500" fill="#e6e6e6" textLength="104">[−][Top][2D Wireframe]</text>

      {/* View cube */}
      <circle cx="1185.500" cy="165" r="37.500" fill="none" stroke="#282828" strokeWidth="10" />
      <rect x="1167" y="146" width="37.500" height="37" fill="#9b9b9b" />
      <g fill="#a8a8a8" fontSize="14" fontWeight="700" textAnchor="middle">
        <text x="1186" y="129">N</text>
        <text x="1186" y="211">S</text>
        <text x="1227" y="170">E</text>
        <text x="1147" y="170">W</text>
        <text x="1186" y="168" fontSize="10" fontWeight="600" fill="#333">TOP</text>
      </g>
      <rect x="1167" y="228" width="37" height="13" rx="3" fill="#77777d" stroke="#a2a2a8" />
      <text x="1169.500" y="238" fontSize="9" fill="#c6c6cb" textLength="20">WCS</text>
      <path d="M1195 232.500h6l-3 3.500z" fill="#9a9aa0" />

      <rect x="49.500" y="128.500" width="1175" height="65" rx="9" fill="none" stroke="#fff22d" strokeWidth="3.400" />
      <g fontSize="42" fontWeight="700" strokeWidth="1.100">
        {banner.map((b) => (
          <text key={b.text} x={b.x} y="173.700" fill={b.color} stroke={b.color} textLength={b.w} lengthAdjust="spacingAndGlyphs">{b.text}</text>
        ))}
      </g>

      <Crosshair x={212.3} y={255.5} arm={38.5} box={7.5} w={2} />
      <Crosshair x={600.3} y={254} arm={61.5} vArm={64} box={3.5} w={1.4} />
      <Crosshair x={1004.5} y={260.3} arm={96.5} vArm={92} box={3.5} w={1.3} />
      <Crosshair x={212.8} y={409.5} arm={38.5} box={7.5} w={2} />
      <Crosshair x={600.3} y={413.5} arm={38.5} box={14} w={2} />
      <Crosshair x={1004.4} y={414.7} arm={38.5} box={24.5} w={2} />

      <BlockArrow x={346} y={255.3} fill="#3f48cc" />
      <BlockArrow x={749.5} y={255.3} fill="#3f48cc" />
      <BlockArrow x={345.6} y={406.7} fill="#a349a4" />
      <BlockArrow x={746} y={411.7} fill="#a349a4" />
      <BlockArrow x={342.8} y={549} fill="#00a2e8" />
      <BlockArrow x={746.3} y={550.5} fill="#00a2e8" />

      <GripRect x={143} y={488.5} grip={6.5} long={10.5} thick={2.6} />
      <GripRect x={530.3} y={487} grip={15} long={22} thick={6.5} />
      <GripRect x={932.2} y={478.4} grip={28} long={42.5} thick={12} />

      {/* UCS icon */}
      <g fill="none" stroke="#c4c4c4">
        <path d="M59 602V560M59 602.500h42M55.500 598.500h8v8h-8z" />
        <path d="m60.500 548 4.500 5 4.500-5M65 553v5M103.500 591.500l10 10M113.500 591.500l-10 10" />
      </g>
    </svg>
  );
}

function CommandLine() {
  return (
    <div className="flex h-[48px] w-[1259px] shrink-0">
      <div className="flex w-[20px] flex-col items-center bg-[#2b323d] pt-[3px]">
        <svg viewBox="0 0 15 4" className="h-[4px] w-[15px]"><path d="M0 1h15M0 3h15" stroke="#e4e7ea" strokeDasharray="1.200 1" /></svg>
        <svg viewBox="0 0 8 8" className="mt-[7px] mr-[3px] size-[8px]"><path d="m.5.5 7 7M7.500.5l-7 7" stroke="#fff" strokeWidth="1.500" /></svg>
        <svg viewBox="0 0 13 13" className="mt-[8px] mr-[2px] size-[12px]"><path d="m1 12 7-7M12.500 3 10 5 8 3l2-2.500C7.500 0 6 2 6.500 4.500L9 6.500C11 7 13 5.500 12.500 3z" fill="#eceef0" stroke="#eceef0" strokeWidth="1.800" /></svg>
      </div>
      <div className="flex flex-1 flex-col font-['DejaVu_Sans_Mono',monospace] text-[10px]">
        <div className="h-[31px] border-b border-[#8f8f8f] bg-[#c8c8c8] pt-[5px] pl-[2px] leading-[12.500px] text-[#1c1c1c]">
          <div>Automatic save to C:\Users\AppData\Local\Temp\sample_1_24273_8c99c78a.sv$ ...</div>
          <div>Command:</div>
        </div>
        <div className="flex flex-1 items-center bg-white pl-[3px] text-[#777] italic">
          <svg viewBox="0 0 22 11" className="mr-[6px] h-[11px] w-[21px]">
            <path d="M.5.5h13v10H.5z" fill="#eee" stroke="#888" /><path d="M0 0h14v3H0z" fill="#777" />
            <path d="m2.500 5 2 1.500-2 1.500M5.500 8.500h3" fill="none" stroke="#666" strokeWidth=".8" /><path d="M15 4h6l-3 3.500z" fill="#444" />
          </svg>
          Type a command
        </div>
      </div>
    </div>
  );
}

const layouts = [
  ['PD 01', 'w-[47px]'],
  ['PD 02', 'w-[47px]'],
  ['PD 03', 'w-[47px]'],
  ['PD 04', 'w-[47px]'],
  ['SITE PLAN', 'w-[65px]'],
  ['EUIP 1', 'w-[49px]'],
];

function LayoutTabs() {
  return (
    <div className="flex h-[16px] text-[9.5px] leading-[16px] text-[#b7bcc3]">
      <div className="ml-[8px] w-[51px] bg-[#3b4454] text-center font-bold text-white [clip-path:polygon(0_0,100%_0,91%_90%,87%_100%,13%_100%,9%_90%)]">Model</div>
      {layouts.map(([label, width]) => (
        <div key={label} className={clsx('-ml-px shrink-0 bg-[#2d3541] text-center [clip-path:polygon(0_0,100%_0,94%_90%,90%_100%,8%_100%,4%_90%)]', width)}>{label}</div>
      ))}
      <div className="ml-[3px] flex h-[15px] w-[19px] items-center justify-center bg-[#2d3541] [clip-path:polygon(8%_0,100%_0,90%_100%,0_100%)]">
        <Icon name="plus" className="size-[8px]" />
      </div>
    </div>
  );
}

function Cell({ icon, width = 'w-[20px]', on, gap }: { icon: string; width?: string; on?: boolean; gap?: string }) {
  return (
    <span className={clsx('flex h-[20px] shrink-0 items-center justify-center', width, gap, on ? 'bg-[#5f8fc4]' : 'bg-[#343c48]')}>
      <Icon name={icon} />
    </span>
  );
}

const Drop = ({ width = 'w-[12px]' }: { width?: string }) => <Caret className={clsx('h-[20px] bg-[#343c48]', width)} />;

function StatusBar() {
  return (
    <div className="mt-[2px] flex h-[20px] pl-[435px] text-[10px] leading-[20px] text-[#eceef0]">
      <span className="w-[176px] shrink-0 bg-[#343c48] pr-[5px] text-right tracking-[-0.22px] whitespace-nowrap">7136250.8425, -3.0862E+06, 0.0000</span>
      <span className="ml-px w-[39px] shrink-0 bg-[#343c48] text-center tracking-[-0.1px]">MODEL</span>
      <Cell icon="grid" gap="ml-[2px]" />
      <Cell icon="dots" />
      <Drop width="w-[13px]" />
      <Cell icon="infer" gap="ml-[2px]" />
      <Cell icon="dynIn" width="w-[19px]" on gap="ml-px" />
      <Cell icon="ortho" width="w-[19px]" on gap="ml-[2px]" />
      <Cell icon="polar" />
      <Drop width="w-[13px]" />
      <Cell icon="iso" />
      <Drop />
      <Cell icon="track" width="w-[18px]" on gap="ml-px" />
      <Cell icon="osnap" width="w-[19px]" on gap="ml-[2px]" />
      <Drop width="w-[14px]" />
      <Cell icon="lweight" width="w-[19px]" on />
      <Cell icon="transp" width="w-[19px]" on gap="ml-[2px]" />
      <Cell icon="cycle" gap="ml-[2px]" />
      <Cell icon="osnap3" />
      <Drop width="w-[13px]" />
      <Cell icon="ducs" gap="ml-[2px]" />
      <Cell icon="filter" />
      <Drop />
      <Cell icon="gear" width="w-[21px]" gap="ml-[2px]" />
      <Drop />
      <Cell icon="plus" width="w-[22px]" />
      <Cell icon="ruler" width="w-[23px]" gap="ml-px" />
      <span className="w-[42px] shrink-0 bg-[#343c48] pl-px">Decimal</span>
      <Drop width="w-[16px]" />
      <Cell icon="lockUi" gap="ml-[2px]" />
      <Drop />
      <Cell icon="perf" width="w-[19px]" on gap="ml-[2px]" />
      <Cell icon="cloudOk" width="w-[24px]" gap="ml-px" />
      <Cell icon="menu" width="w-[23px]" gap="ml-px" />
    </div>
  );
}

export default function App() {
  return (
    <div className="flex h-[720px] w-[1280px] flex-col overflow-hidden bg-[#222933] font-['Open_Sans','Noto_Sans',sans-serif]">
      <TitleBar />
      <FileTabs />
      <Toolbars />
      <main className="flex h-[575px] shrink-0">
        <div className="flex w-[1260px] flex-col">
          <div className="flex h-[525px]">
            <aside className="flex w-[45px] gap-[2px] bg-[#3b4454]">
              <ToolColumn items={drawTools} className="w-[20px] pr-px" />
              <ToolColumn items={modifyTools} className="w-[21px] border-l pr-px" />
            </aside>
            <div className="flex flex-1 flex-col bg-[#efefef]">
              <div className="flex">
                <ModelSpace />
                <div className="flex w-[14px] justify-center pt-[444px]">
                  <span className="h-[14px] w-[4px] bg-[#858585]" />
                </div>
              </div>
              <div className="flex flex-1 items-center pl-[1102px]">
                <span className="h-[4px] w-[14px] bg-[#858585]" />
              </div>
            </div>
          </div>
          <div className="h-[2px] bg-[#343c48]" />
          <CommandLine />
        </div>
        <aside className="mb-[2px] ml-[2px] flex flex-1 flex-col items-center border border-[#1d232c] bg-[#3b4454] pt-[6px]">
          <svg viewBox="0 0 8 3" className="h-[3px] w-[8px]"><path d="M0 .5h8M0 2.500h8" stroke="#c9cdd3" strokeDasharray="1.200 1" /></svg>
          <span className="mt-[251px] rotate-180 text-[9.500px] leading-[14px] text-[#e4e7ea] [writing-mode:vertical-rl]">Properties</span>
        </aside>
      </main>
      <LayoutTabs />
      <StatusBar />
    </div>
  );
}
